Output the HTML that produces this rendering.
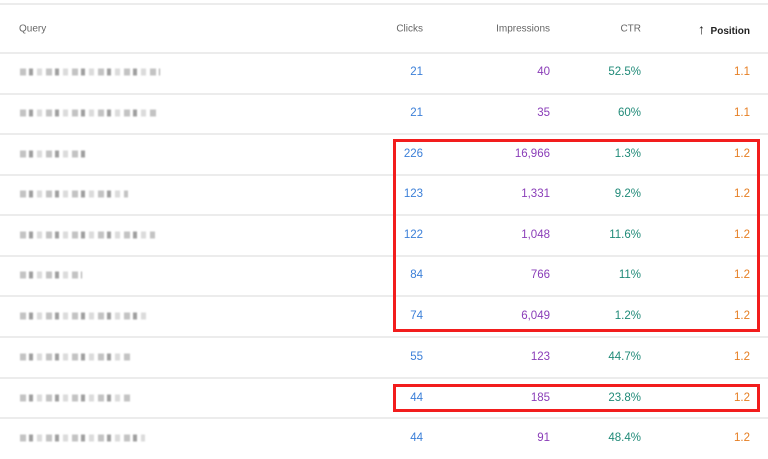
<!DOCTYPE html>
<html><head><style>
body{margin:0;width:768px;height:459px;background:#fff;overflow:hidden;position:relative;font-family:"Liberation Sans",sans-serif}
.l{position:absolute;left:0;width:768px;height:2px;background:#ececec}
.t{position:absolute;font-size:11.5px;transform:translateY(-50%);text-align:right;width:100px}
.h{color:#666;font-size:10px}
.c{color:#3b7fd8}.i{color:#8a3db8}.r{color:#208a78}.p{color:#e67e22}
.q{position:absolute;left:20px;height:7px;transform:translateY(-50%);background:repeating-linear-gradient(90deg,#aaa 0 6px,#fff 6px 9px,#777 9px 13px,#fff 13px 17px,#ccc 17px 22px,#fff 22px 26px);opacity:.7;filter:blur(0.8px)}
.box{position:absolute;border:3px solid #f21d1d;box-sizing:border-box}
</style></head><body>
<div class="l" style="top:3px"></div>
<div class="l" style="top:52px"></div>
<div class="l" style="top:93px"></div>
<div class="l" style="top:133px"></div>
<div class="l" style="top:174px"></div>
<div class="l" style="top:214px"></div>
<div class="l" style="top:255px"></div>
<div class="l" style="top:295px"></div>
<div class="l" style="top:336px"></div>
<div class="l" style="top:377px"></div>
<div class="l" style="top:417px"></div>
<div class="t h" style="left:19px;top:29px;text-align:left">Query</div>
<div class="t h" style="left:323px;top:29px">Clicks</div>
<div class="t h" style="left:450px;top:29px">Impressions</div>
<div class="t h" style="left:541px;top:29px">CTR</div>
<div class="t h" style="left:650px;top:29px;color:#222;font-weight:bold"><span style="font-size:14px;font-weight:normal">↑</span>&nbsp; Position</div>

<div class="q" style="top:72px;width:140px"></div>
<div class="q" style="top:113px;width:138px"></div>
<div class="q" style="top:154px;width:68px"></div>
<div class="q" style="top:194px;width:108px"></div>
<div class="q" style="top:235px;width:135px"></div>
<div class="q" style="top:275px;width:62px"></div>
<div class="q" style="top:316px;width:130px"></div>
<div class="q" style="top:357px;width:110px"></div>
<div class="q" style="top:398px;width:112px"></div>
<div class="q" style="top:438px;width:125px"></div>

<div class="t c" style="left:323px;top:72px">21</div><div class="t i" style="left:450px;top:72px">40</div><div class="t r" style="left:541px;top:72px">52.5%</div><div class="t p" style="left:650px;top:72px">1.1</div>
<div class="t c" style="left:323px;top:113px">21</div><div class="t i" style="left:450px;top:113px">35</div><div class="t r" style="left:541px;top:113px">60%</div><div class="t p" style="left:650px;top:113px">1.1</div>
<div class="t c" style="left:323px;top:154px">226</div><div class="t i" style="left:450px;top:154px">16,966</div><div class="t r" style="left:541px;top:154px">1.3%</div><div class="t p" style="left:650px;top:154px">1.2</div>
<div class="t c" style="left:323px;top:194px">123</div><div class="t i" style="left:450px;top:194px">1,331</div><div class="t r" style="left:541px;top:194px">9.2%</div><div class="t p" style="left:650px;top:194px">1.2</div>
<div class="t c" style="left:323px;top:235px">122</div><div class="t i" style="left:450px;top:235px">1,048</div><div class="t r" style="left:541px;top:235px">11.6%</div><div class="t p" style="left:650px;top:235px">1.2</div>
<div class="t c" style="left:323px;top:275px">84</div><div class="t i" style="left:450px;top:275px">766</div><div class="t r" style="left:541px;top:275px">11%</div><div class="t p" style="left:650px;top:275px">1.2</div>
<div class="t c" style="left:323px;top:316px">74</div><div class="t i" style="left:450px;top:316px">6,049</div><div class="t r" style="left:541px;top:316px">1.2%</div><div class="t p" style="left:650px;top:316px">1.2</div>
<div class="t c" style="left:323px;top:357px">55</div><div class="t i" style="left:450px;top:357px">123</div><div class="t r" style="left:541px;top:357px">44.7%</div><div class="t p" style="left:650px;top:357px">1.2</div>
<div class="t c" style="left:323px;top:398px">44</div><div class="t i" style="left:450px;top:398px">185</div><div class="t r" style="left:541px;top:398px">23.8%</div><div class="t p" style="left:650px;top:398px">1.2</div>
<div class="t c" style="left:323px;top:438px">44</div><div class="t i" style="left:450px;top:438px">91</div><div class="t r" style="left:541px;top:438px">48.4%</div><div class="t p" style="left:650px;top:438px">1.2</div>

<div class="box" style="left:393px;top:139px;width:367px;height:193px"></div>
<div class="box" style="left:393px;top:384px;width:367px;height:28px"></div>
</body></html>
